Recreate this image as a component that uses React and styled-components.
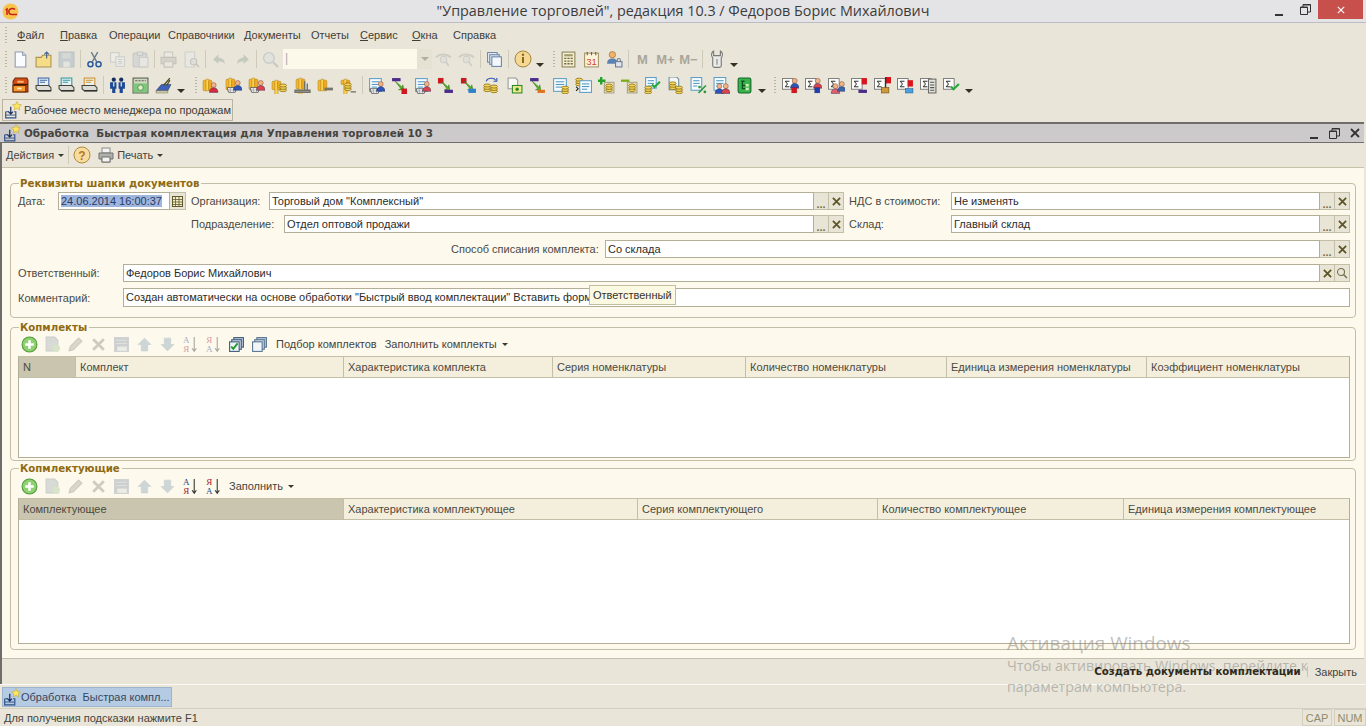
import styled, { createGlobalStyle } from "styled-components";

const GlobalStyle = createGlobalStyle`
  html, body { margin: 0; padding: 0; height: 100%; overflow: hidden; }
  body { font-family: "Liberation Sans", Arial, sans-serif; font-size: 11px; color: #3a3a36; background: #e9e5d9; }
  #root { height: 100%; }
  * { box-sizing: border-box; }
`;

const Page = styled.div`
  position: relative;
  width: 1366px;
  height: 726px;
  display: flex;
  flex-direction: column;
  overflow: hidden;
`;

const TitleBar = styled.div`
  height: 23px;
  flex: none;
  position: relative;
  display: flex;
  align-items: center;
  justify-content: center;
  background: #e4e4e6;
  border-bottom: 1px solid #bcbcc4;
`;

const AppLogo = styled.div`
  position: absolute;
  left: 2px;
  top: 3px;
`;

const TitleText = styled.div`
  font-family: "Open Sans", sans-serif;
  font-size: 14.35px;
  color: #3c3c3c;
  margin-left: 0;
  margin-top: -1px;
`;

const WinButtons = styled.div`
  position: absolute;
  right: 3px;
  top: 0;
  height: 19px;
  display: flex;
  align-items: center;
`;

const WinBtn = styled.div`
  width: ${(p) => p.$w}px;
  height: 19px;
  display: flex;
  align-items: center;
  justify-content: center;
  background: ${(p) => p.$bg || "transparent"};
`;

const MenuBar = styled.div`
  height: 23px;
  flex: none;
  display: flex;
  align-items: center;
  padding-left: 3px;
`;

const MenuItem = styled.div`
  width: ${(p) => p.$w}px;
  font-size: 11px;
  color: #3f3f39;
`;

const Toolbar = styled.div`
  height: 26px;
  flex: none;
  display: flex;
  align-items: center;
  padding-left: 3px;
`;

const Grip = styled.div`
  width: 6px;
  height: 16px;
  flex: none;
  margin-left: ${(p) => p.$ml || 0}px;
  margin-right: ${(p) => p.$mr || 0}px;
  background: repeating-linear-gradient(to bottom, #b8b4a4 0 1px, transparent 1px 3px);
  background-size: 2px 100%;
  background-repeat: no-repeat;
  background-position: center;
`;

const ToolBtn = styled.div`
  width: 23px;
  height: 22px;
  flex: none;
  display: flex;
  align-items: center;
  justify-content: center;
  opacity: ${(p) => (p.$off ? 0.38 : 1)};
`;

const Sep = styled.div`
  width: 5px;
  height: 18px;
  flex: none;
  position: relative;
  &::after {
    content: "";
    position: absolute;
    left: 2px;
    top: 0;
    bottom: 0;
    width: 1px;
    background: #cfcab8;
  }
`;

const DropArrow = styled.div`
  width: 12px;
  height: 22px;
  flex: none;
  position: relative;
  &::after {
    content: "";
    position: absolute;
    left: 2px;
    bottom: 3px;
    border-left: 4px solid transparent;
    border-right: 4px solid transparent;
    border-top: 4px solid #35301f;
  }
`;

const Combo = styled.div`
  width: 149px;
  height: 20px;
  flex: none;
  margin-left: 1px;
  display: flex;
  background: #fdf9ea;
`;

const ComboInput = styled.div`
  flex: 1;
  padding-left: 2px;
  color: #aaa;
  font-size: 12px;
  line-height: 18px;
`;

const ComboDrop = styled.div`
  width: 15px;
  background: #e6e2d3;
  display: flex;
  align-items: center;
  justify-content: center;
  &::after {
    content: "";
    border-left: 4px solid transparent;
    border-right: 4px solid transparent;
    border-top: 4px solid #b2ae9f;
  }
`;

const MemoKey = styled.span`
  font-size: 13px;
  font-weight: 700;
  color: #a9a69a;
  white-space: nowrap;
`;

const TabRow = styled.div`
  height: 24px;
  flex: none;
  padding: 1px 0 0 2px;
`;

const OpenTab = styled.div`
  width: 231px;
  height: 22px;
  display: flex;
  align-items: center;
  gap: 2px;
  padding-left: 1px;
  background: #ece7da;
  border: 1px solid #b9b49f;
  font-size: 11px;
  color: #3c3c36;
  white-space: nowrap;
`;

const ChildWindow = styled.div`
  flex: 1;
  min-height: 0;
  margin-right: 2px;
  display: flex;
  flex-direction: column;
  border-left: 2px solid #6f6d6a;
  background: #fdf9ec;
`;

const ChildTitle = styled.div`
  height: 21px;
  flex: none;
  margin-left: -2px;
  display: flex;
  align-items: center;
  gap: 3px;
  padding: 0 0 0 3px;
  background: #cdcacb;
  border-top: 2px solid #6f6d6a;
  border-bottom: 1px solid #706e6c;
`;

const ChildTitleText = styled.div`
  flex: 1;
  font-family: "DejaVu Sans", sans-serif;
  font-size: 10.4px;
  font-weight: 700;
  color: #45443f;
  white-space: pre;
`;

const ChildButtons = styled.div`
  display: flex;
  align-items: center;
  gap: 10px;
  padding-right: 4px;
`;

const ActionBar = styled.div`
  height: 25px;
  flex: none;
  display: flex;
  align-items: center;
  padding-left: 4px;
  background: #ebe6da;
  border-bottom: 1px solid #c8c2a8;
`;

const ActionItem = styled.div`
  display: flex;
  align-items: center;
  gap: 3px;
  font-size: 11px;
  color: #44443e;
  margin-left: ${(p) => p.$ml || 0}px;
  margin-right: ${(p) => p.$mr || 0}px;
`;

const SmallArrow = styled.span`
  display: inline-block;
  border-left: 3px solid transparent;
  border-right: 3px solid transparent;
  border-top: 3px solid #3a3a34;
  margin-left: 1px;
`;

const Body = styled.div`
  flex: 1;
  min-height: 0;
  padding: 15px 8px 0;
`;

const Group = styled.div`
  position: relative;
  height: ${(p) => p.$h}px;
  margin-top: ${(p) => p.$mt || 0}px;
  padding: ${(p) => p.$pt}px 5px 0 7px;
  border: 1px solid #c3bea6;
  border-radius: 4px;
`;

const Legend = styled.div`
  position: absolute;
  left: 8px;
  top: -7px;
  padding: 0 2px 0 1px;
  background: #fdf9ec;
  font-family: "DejaVu Sans", sans-serif;
  font-size: 10.2px;
  font-weight: 700;
  line-height: 13px;
  color: #8f6a12;
`;

const FieldRow = styled.div`
  display: flex;
  align-items: center;
  height: ${(p) => p.$h || 18}px;
  margin-top: ${(p) => p.$mt || 0}px;
  margin-left: ${(p) => p.$ml || 0}px;
`;

const Label = styled.div`
  width: ${(p) => p.$w}px;
  margin-left: ${(p) => p.$ml || 0}px;
  flex: none;
  font-size: 11px;
  color: #4a4a44;
  white-space: nowrap;
`;

const Input = styled.div`
  flex: ${(p) => (p.$w ? "none" : "1")};
  width: ${(p) => (p.$w ? `${p.$w}px` : "auto")};
  height: 100%;
  padding-left: 2px;
  background: #fff;
  border: 1px solid #b3ae96;
  font-size: 11px;
  line-height: 16px;
  color: #2c2c2a;
  white-space: nowrap;
  overflow: hidden;
`;

const Selected = styled.span`
  background: #9fb6dc;
  color: #2b3b66;
`;

const FieldBtn = styled.div`
  width: ${(p) => p.$w || 15}px;
  height: 100%;
  flex: none;
  display: flex;
  align-items: center;
  justify-content: center;
  background: #e9e5d6;
  border: 1px solid #c3bea6;
  border-left: none;
  color: #5e5526;
  font-size: 11px;
  line-height: 1;
`;

const Dots = styled.span`
  margin-top: 6px;
  font-weight: 700;
  letter-spacing: 0;
  color: #776d3c;
`;

const GridToolbar = styled.div`
  height: 18px;
  display: flex;
  align-items: center;
`;

const GridBtn = styled.div`
  width: 23px;
  height: 18px;
  flex: none;
  display: flex;
  align-items: center;
  justify-content: center;
  opacity: ${(p) => (p.$off ? 0.42 : 1)};
`;

const GridText = styled.div`
  display: flex;
  align-items: center;
  gap: 4px;
  margin-left: ${(p) => p.$ml || 0}px;
  font-size: 11px;
  color: #44443e;
  white-space: nowrap;
`;

const Table = styled.div`
  height: ${(p) => p.$h}px;
  margin-top: 3px;
  background: #fff;
  border: 1px solid #b3ae96;
  border-top-color: #c3bea6;
`;

const TableHead = styled.div`
  height: 21px;
  display: grid;
  grid-template-columns: ${(p) => p.$cols};
  border-bottom: 1px solid #c3bea6;
`;

const HeadCell = styled.div`
  padding-left: 4px;
  line-height: 20px;
  font-size: 11px;
  color: #4b4a42;
  background: ${(p) => (p.$active ? "#c9c5ae" : "#f4efdd")};
  border-right: 1px solid #c3bea6;
  white-space: nowrap;
  overflow: hidden;
  &:last-child { border-right: none; }
`;

const BottomBar = styled.div`
  height: 26px;
  flex: none;
  display: flex;
  align-items: center;
  justify-content: flex-end;
  padding-right: 7px;
  background: #e9e5d9;
  border-top: 1px solid #c4c0ad;
`;

const CreateBtn = styled.div`
  font-family: "DejaVu Sans", sans-serif;
  font-weight: 700;
  font-size: 10.2px;
  color: #2e2a1c;
  padding-right: 6px;
  border-right: 1px solid #c9c5b4;
  position: relative;
  z-index: 2;
`;

const CloseBtn = styled.div`
  font-size: 11px;
  color: #44443e;
  padding-left: 7px;
  position: relative;
  z-index: 2;
`;

const TaskBar = styled.div`
  height: 24px;
  flex: none;
  padding: 2px 0 0 2px;
  border-top: 1px solid #fbfaf4;
`;

const TaskTab = styled.div`
  width: 170px;
  height: 20px;
  display: flex;
  align-items: center;
  gap: 0;
  padding-left: 0;
  background: #b5cbe3;
  border: 1px solid #9db4ce;
  font-size: 11px;
  color: #38475e;
  white-space: pre;
`;

const StatusBar = styled.div`
  height: 18px;
  flex: none;
  display: flex;
  align-items: center;
  gap: 2px;
  padding: 0 0 0 4px;
  border-top: 1px solid #d4d0bf;
  font-size: 11px;
  color: #44443e;
`;

const StatusText = styled.div`
  flex: 1;
`;

const StatusCell = styled.div`
  width: ${(p) => p.$w}px;
  height: 17px;
  line-height: 16px;
  text-align: center;
  color: #8f8b6c;
  border: 1px solid #d4d0bf;
`;

const Tooltip = styled.div`
  position: absolute;
  left: 589px;
  top: 285px;
  width: 87px;
  height: 20px;
  padding-left: 3px;
  line-height: 18px;
  font-size: 11px;
  color: #33332c;
  background: #fcf9e2;
  border: 1px solid #c3bea0;
  z-index: 5;
`;

const Watermark = styled.div`
  position: absolute;
  left: 1007px;
  top: 632px;
  font-family: "Open Sans", sans-serif;
  color: rgba(130, 130, 125, 0.5);
  z-index: 1;
  pointer-events: none;
`;

const WatermarkTitle = styled.div`
  font-size: 18.9px;
  line-height: 22px;
`;

const WatermarkText = styled.div`
  margin-top: 1px;
  font-size: 14.2px;
  line-height: 21px;
  white-space: nowrap;
`;

/* ---- icon parts, all in a 16x16 box ---- */

const Svg = ({ children, size = 17, box = 16 }) => (
  <svg width={size} height={size} viewBox={`0 0 ${box} ${box}`} style={{ display: "block", flex: "none" }}>
    {children}
  </svg>
);

const Person = ({ x = 0, y = 0, c = "#2c55b8" }) => (
  <g transform={`translate(${x} ${y})`}>
    <circle cx="4" cy="2.6" r="2.3" fill="#f0b48a" stroke="#8a4a2a" strokeWidth=".5" />
    <path d="M0 9.5c0-3 1.6-4.4 4-4.4s4 1.4 4 4.4z" fill={c} stroke="#1e2a55" strokeWidth=".4" />
  </g>
);

const Gold = ({ x = 0, y = 0, h = 10 }) => (
  <g transform={`translate(${x} ${y})`}>
    <rect x="0" y="1" width="3" height={h} rx="1" fill="#f6b830" stroke="#b07a10" strokeWidth=".5" />
    <rect x="2.6" y="0" width="3" height={h + 1} rx="1" fill="#fbd24e" stroke="#b07a10" strokeWidth=".5" />
    <rect x="5.2" y="1" width="3" height={h} rx="1" fill="#f3a921" stroke="#b07a10" strokeWidth=".5" />
  </g>
);

const Coins = ({ x = 0, y = 0 }) => (
  <g transform={`translate(${x} ${y})`} fill="#f7d65a" stroke="#7f6510" strokeWidth=".7">
    <ellipse cx="3.4" cy="6.4" rx="3.2" ry="1.4" />
    <ellipse cx="3.4" cy="4.2" rx="3.2" ry="1.4" />
    <ellipse cx="3.4" cy="2" rx="3.2" ry="1.4" />
  </g>
);

const Basket = ({ x = 0, y = 0 }) => (
  <g transform={`translate(${x} ${y})`}>
    <path d="M0 0h9l-1.4 4.4H1.4z" fill="#fff" stroke="#555" strokeWidth=".8" />
    <path d="M3 .4v3.6M6 .4v3.6M.7 2.2h7.6" stroke="#777" strokeWidth=".5" />
  </g>
);

const Sheet = ({ x = 0, y = 0, w = 11, h = 12, lines = "#3f8fbf", ink = "#5f9fc7" }) => (
  <g transform={`translate(${x} ${y})`}>
    <rect x=".5" y=".5" width={w} height={h} fill="#f6fbfe" stroke={ink} />
    <path d={`M2.5 3.5h${w - 4}M2.5 6h${w - 4}M2.5 8.5h${w - 6}`} stroke={lines} strokeWidth=".9" />
  </g>
);

const Block = ({ x, y, w = 5, h = 5, c = "#d8141c" }) => (
  <rect x={x} y={y} width={w} height={h} fill={c} stroke="#00000044" strokeWidth=".4" />
);

const Dash = ({ x, y, w = 8, c = "#4c2b8a" }) => (
  <g>
    <rect x={x} y={y} width={w} height="3" fill={c} />
    <path d={`M${x + 1} ${y + 1.5}h${w - 2}`} stroke="#fff" strokeWidth=".8" strokeDasharray="1 1" />
  </g>
);

const DownArrow = ({ x = 4, y = 4 }) => (
  <path
    transform={`translate(${x} ${y})`}
    d="M0 0l7 6V3.4L8 8H3.2L5.4 7z"
    fill="#62b52a"
    stroke="#2f7d14"
    strokeWidth=".6"
  />
);

const Sigma = ({ x = 0, y = 1 }) => (
  <g transform={`translate(${x} ${y})`}>
    <rect x=".5" y=".5" width="10" height="10" fill="#fdfdfb" stroke="#6b6b6b" strokeWidth=".8" />
    <path d="M7 3H3l2.2 2.6L3 8.2h4" fill="none" stroke="#222" strokeWidth=".9" />
  </g>
);

const Check = ({ x = 7, y = 6 }) => (
  <path transform={`translate(${x} ${y})`} d="M.5 3l2.3 2.5L8 .5" fill="none" stroke="#24a83a" strokeWidth="2" />
);

const Printer = ({ band }) => (
  <>
    <rect x="3" y="1" width="10" height="7" fill="#e8f3f6" stroke={band} />
    <path d="M4.5 3h7M4.5 5h5" stroke={band} />
    <path d="M1 8h12l2 2v3H3l-2-2z" fill="#dcdcd4" stroke="#44443c" />
    <path d="M3 13h12" stroke="#222" strokeWidth="1.2" />
  </>
);

// tray with a down arrow and a yellow star: the form icon of the window
const Wizard = ({ size = 18 }) => (
  <Svg size={size}>
    <path d="M1.500 9.500h3M9 9.500h1.500v5.500h-9V9.500" fill="none" stroke="#2f4f86" strokeWidth="1" />
    <path d="M1.500 12.500h9" stroke="#2f4f86" strokeWidth=".8" />
    <path d="M6 5v6.500M4 9.500l2 2.200 2-2.200" fill="none" stroke="#1c2f5c" strokeWidth="1.100" />
    <path d="M11.500 .5l1.100 2.500 2.900.4-2.100 1.900.6 2.700-2.500-1.500-2.500 1.500.6-2.700-2.100-1.900 2.900-.4z" fill="#fbe75e" stroke="#c4a32e" strokeWidth=".5" />
  </Svg>
);

const barIcons = {
  newDoc: (
    <Svg>
      <path d="M3 1h7l3 3v11H3z" fill="#fbfcff" stroke="#8f99ad" />
      <path d="M10 1v3h3" fill="#dde2ee" stroke="#8f99ad" />
    </Svg>
  ),
  open: (
    <Svg>
      <path d="M1 6h5l1-2h8v11H1z" fill="#f6dc86" stroke="#aa9350" />
      <path d="M11 7V1M8.800 3.200L11 1l2.200 2.200" fill="none" stroke="#48648c" strokeWidth="1.100" />
    </Svg>
  ),
  save: (
    <Svg>
      <path d="M1 1h14v14H1z" fill="#8fa7bd" stroke="#74889c" />
      <rect x="4" y="2" width="8" height="5" fill="#b7c6d3" />
      <rect x="5" y="10" width="6" height="5" fill="#dde3e8" />
    </Svg>
  ),
  cut: (
    <Svg>
      <path d="M5 1l5 9M11 1L6 10" stroke="#6b7d8e" strokeWidth="1.300" />
      <circle cx="4.200" cy="12.500" r="2.400" fill="none" stroke="#2a5a9c" strokeWidth="1.400" />
      <circle cx="11.800" cy="12.500" r="2.400" fill="none" stroke="#2a5a9c" strokeWidth="1.400" />
    </Svg>
  ),
  copy: (
    <Svg>
      <rect x="1.500" y="1.500" width="8" height="9" fill="#f3f5f8" stroke="#9aa8b8" />
      <rect x="6.500" y="5.500" width="8" height="9" fill="#f3f5f8" stroke="#9aa8b8" />
      <path d="M8.500 8h4M8.500 10h4M8.500 12h4" stroke="#9aa8b8" />
    </Svg>
  ),
  paste: (
    <Svg>
      <rect x="1" y="2" width="13" height="13" rx="1" fill="#b9c3ce" stroke="#8e9aa8" />
      <rect x="5" y="1" width="5" height="3" fill="#d6dce3" stroke="#8e9aa8" />
      <rect x="7" y="6" width="8" height="9" fill="#e4e8ec" stroke="#9aa6b2" />
    </Svg>
  ),
  print: (
    <Svg>
      <rect x="4" y="1" width="8" height="5" fill="#eee" stroke="#999" />
      <path d="M1 6h14v6h-3v3H4v-3H1z" fill="#b4b4b0" stroke="#8a8a86" />
      <rect x="4" y="10" width="8" height="5" fill="#e8e8e8" stroke="#999" />
    </Svg>
  ),
  preview: (
    <Svg>
      <path d="M2 1h9v14H2z" fill="#e9ebef" stroke="#a8adb5" />
      <circle cx="10" cy="10" r="3" fill="#ced6de" stroke="#8f8f88" />
      <path d="M12 12l3 3" stroke="#8f8f88" strokeWidth="1.600" />
    </Svg>
  ),
  undo: (
    <Svg>
      <path d="M7 3L2 8l5 4V9.600c2.600 0 4.600.8 6 2.400 0-3.600-2.200-5.600-6-6z" fill="#8ba094" />
    </Svg>
  ),
  redo: (
    <Svg>
      <path d="M9 3l5 5-5 4V9.600c-2.600 0-4.600.8-6 2.400 0-3.600 2.200-5.600 6-6z" fill="#8ba094" />
    </Svg>
  ),
  search: (
    <Svg>
      <circle cx="6.500" cy="6.500" r="5" fill="#d8dee6" stroke="#9aa2ac" strokeWidth="1.300" />
      <path d="M10.500 10.500l4.500 4.500" stroke="#a09a84" strokeWidth="2" />
    </Svg>
  ),
  findPrev: (
    <Svg>
      <path d="M1 6c3-3.600 10-3.600 14 0" fill="none" stroke="#a7aba8" strokeWidth="2" />
      <circle cx="8" cy="8" r="3" fill="#d2dadf" stroke="#a7aba8" />
      <path d="M10 10l3 4" stroke="#a7aba8" strokeWidth="1.600" />
    </Svg>
  ),
  windows: (
    <Svg>
      <rect x="1.500" y="1.500" width="9" height="9" fill="#f3f6fa" stroke="#6c86a8" />
      <rect x="3.500" y="3.500" width="9" height="9" fill="#dbe6f2" stroke="#6c86a8" />
      <rect x="5.500" y="5.500" width="9" height="9" fill="#f3f6fa" stroke="#6c86a8" />
    </Svg>
  ),
  calc: (
    <Svg>
      <rect x="2" y="1" width="12" height="14" fill="#f3ecd0" stroke="#8b8358" />
      <rect x="4" y="3" width="8" height="2" fill="#9f9a6c" />
      <path d="M4 7h2M7 7h2M10 7h2M4 9.500h2M7 9.500h2M10 9.500h2M4 12h2M7 12h2M10 12h2" stroke="#6d6a3c" strokeWidth="1.200" />
    </Svg>
  ),
  calendar: (
    <Svg>
      <rect x="1.500" y="2" width="13" height="13" fill="#fbf3da" stroke="#a39568" />
      <path d="M4 1v3M8 1v3M12 1v3" stroke="#8a5a2a" />
      <text x="8" y="13" fontSize="9" textAnchor="middle" fill="#d8432c" fontFamily="Liberation Sans">31</text>
    </Svg>
  ),
  userLock: (
    <Svg>
      <circle cx="6" cy="3.500" r="3" fill="#f1b36a" stroke="#9a6a2c" strokeWidth=".6" />
      <path d="M1 12c0-3.600 2-5 5-5s5 1.400 5 5z" fill="#5c82b4" />
      <rect x="9" y="10" width="6" height="5" fill="#dfe6ee" stroke="#6c7c90" />
      <path d="M10.500 10V8.600a1.500 1.500 0 0 1 3 0V10" fill="none" stroke="#6c7c90" />
    </Svg>
  ),
  wrench: (
    <Svg size={18}>
      <path d="M5 1v4h6V1c2 1 2.600 4 .8 6v7a1.600 1.600 0 0 1-1.600 1.400H5.800A1.600 1.600 0 0 1 4.200 14V7C2.400 5 3 2 5 1z" fill="#eaeaea" stroke="#7b7b76" />
      <path d="M8 8v5" stroke="#a4a49c" strokeWidth="1.400" />
    </Svg>
  ),
  cabinet: (
    <Svg>
      <path d="M3 1h11l1 2v11H1V4z" fill="#d24a14" stroke="#6e2a08" />
      <path d="M2 7h13" stroke="#3a1a08" />
      <rect x="5" y="3.500" width="6" height="2" fill="#f7b26a" />
      <rect x="1" y="8" width="12" height="6" fill="#f59a2e" stroke="#6e2a08" />
      <rect x="5" y="10" width="4" height="1.500" fill="#fff0d0" />
    </Svg>
  ),
  printerBlue: <Svg><Printer band="#3c64a8" /></Svg>,
  printerTeal: <Svg><Printer band="#2e9aa0" /></Svg>,
  printerGold: <Svg><Printer band="#d0902a" /></Svg>,
  people: (
    <Svg>
      <circle cx="4.500" cy="2.500" r="2" fill="#16305f" />
      <circle cx="11.500" cy="2.500" r="2" fill="#16305f" />
      <path d="M1 5h6v6H6v4H3v-4H1zM9 5h6v6h-2v4h-3v-4H9z" fill="#1c4a94" />
      <path d="M4.500 5v4M11.500 5v4" stroke="#fff" />
    </Svg>
  ),
  money: (
    <Svg>
      <rect x="1" y="1" width="14" height="14" fill="#d2d8c4" stroke="#57604a" />
      <rect x="1.500" y="6" width="13" height="8.500" fill="#7ec77c" />
      <circle cx="8" cy="10" r="2.600" fill="#d8f0c8" stroke="#2f6a2a" strokeWidth=".6" />
      <path d="M3 3.500h10" stroke="#57604a" strokeDasharray="2 1" />
    </Svg>
  ),
  penBoard: (
    <Svg>
      <path d="M1 13l5-6h9l-3 6z" fill="#3f62b8" stroke="#1e2a55" strokeWidth=".5" />
      <path d="M1 13h11v2H1z" fill="#dcd8b0" stroke="#6c6a4a" strokeWidth=".5" />
      <path d="M8 8l6-7M11 8l3-5" stroke="#4d4a22" strokeWidth="1.200" />
    </Svg>
  ),
  goldRedBuyer: <Svg><Gold x="1" y="2" /><Person x="7" y="5" c="#d82c3c" /></Svg>,
  goldBasketBlue: <Svg><Gold x="1" y="1" /><Basket x="2" y="10" /><Person x="8" y="3" c="#2c55b8" /></Svg>,
  goldBasketRed: <Svg><Gold x="1" y="1" /><Basket x="2" y="10" /><Person x="8" y="3" c="#d8434c" /></Svg>,
  goldCoins: <Svg><Gold x="1" y="3" h="8" /><Coins x="8" y="6" /></Svg>,
  goldBars: (
    <Svg>
      <Gold x="2" y="1" h="9" />
      <path d="M10 4v8M12.500 6v6M1 12.500h14v2H1z" stroke="#717168" strokeWidth="1.300" fill="#9a9a90" />
    </Svg>
  ),
  goldDash: <Svg><Gold x="1" y="2" /><rect x="7" y="10" width="8" height="2.600" fill="#75756a" /></Svg>,
  coinsLine: (
    <Svg>
      <Gold x="1" y="2" h="4" />
      <Coins x="4" y="5" />
      <path d="M10 14h5" stroke="#75756a" strokeWidth="1.300" />
    </Svg>
  ),
  docBasketBlue: <Svg><Sheet x="1" y="1" /><Basket x="2" y="11" /><Person x="8" y="4" c="#2c55b8" /></Svg>,
  docBasketRed: <Svg><Sheet x="1" y="1" /><Basket x="2" y="11" /><Person x="8" y="4" c="#d8434c" /></Svg>,
  dashArrowRed: <Svg><Dash x="1" y="1" /><DownArrow x="4" y="4" /><Block x="10" y="11" /></Svg>,
  redArrowDash: <Svg><Block x="1" y="1" /><DownArrow x="4" y="4" /><Dash x="7" y="12" /></Svg>,
  redArrowBlue: <Svg><Block x="1" y="1" /><DownArrow x="4" y="4" /><Dash x="8" y="11" w="7" c="#2f7fd0" /><rect x="8" y="13" width="7" height="2" fill="#2f7fd0" /></Svg>,
  coinsCycle: (
    <Svg>
      <path d="M3 4c1-3 7-4 9-1M13 1v3h-3" fill="none" stroke="#2c55b8" />
      <Coins x="0.500" y="6" />
      <Coins x="7" y="7" />
    </Svg>
  ),
  docPrint: <Svg><path d="M2 1h7l2 2v8H2z" fill="#f7f7f4" stroke="#999" /><rect x="6" y="8" width="9" height="7" fill="#f3e78c" stroke="#2a8a28" /><circle cx="10.500" cy="11.500" r="1.600" fill="#2a8a28" /></Svg>,
  dashArrowOrange: <Svg><Dash x="1" y="1" /><DownArrow x="3" y="4" /><rect x="8" y="12" width="7" height="3" fill="#e2701e" /></Svg>,
  docCoinsIn: <Svg><Sheet x="1" y="1" w="12" /><Coins x="9" y="8" /></Svg>,
  coinsDoc: <Svg><Coins x="0.500" y="0.500" /><Sheet x="4" y="3" w="11" h="11" /><path d="M1 9l2 2-2 2" fill="none" stroke="#222" /></Svg>,
  plusCoins: (
    <Svg>
      <path d="M3 0v7M0 3.500h7" stroke="#22a32a" strokeWidth="2.200" />
      <rect x="6" y="5" width="9" height="10" fill="#e8e2c4" stroke="#a8a282" />
      <Coins x="7" y="6" />
    </Svg>
  ),
  minusCoins: (
    <Svg>
      <path d="M0 3.500h8" stroke="#7aae16" strokeWidth="2.200" />
      <rect x="6" y="5" width="9" height="10" fill="#e8e2c4" stroke="#a8a282" />
      <Coins x="7" y="6" />
    </Svg>
  ),
  docCheck: <Svg><Sheet x="1" y="0" w="10" h="10" /><Coins x="0.500" y="8" /><Check x="7" y="4" /></Svg>,
  coinsPair: <Svg><path d="M2 0h7l2 2v10H2z" fill="#f5f7f2" stroke="#6a8fa8" /><Coins x="2" y="4" /><Coins x="8" y="8" /></Svg>,
  docPercent: (
    <Svg>
      <Sheet x="0.500" y="0" w="10" h="12" />
      <path d="M8 15l7-7" stroke="#2a9a3c" strokeWidth="1.500" />
      <circle cx="9" cy="9.500" r="1.300" fill="#2a9a3c" />
      <circle cx="14" cy="14" r="1.300" fill="#2a9a3c" />
    </Svg>
  ),
  docPeople: <Svg><Sheet x="0.500" y="0" /><Person x="2" y="6" c="#2c55b8" /><Person x="8" y="6" c="#d8434c" /></Svg>,
  greenTree: (
    <Svg>
      <rect x="2" y="1" width="12" height="14" rx="1.500" fill="#38b24a" stroke="#106828" />
      <path d="M5 4h3M6 4v7h3M6 8h3" fill="none" stroke="#0b5220" strokeWidth="1.200" />
      <rect x="9" y="6.500" width="3" height="2.500" fill="#c9f0b0" />
      <rect x="9" y="10" width="3" height="2.500" fill="#c9f0b0" />
    </Svg>
  ),
  sigPeopleRed: <Svg><Sigma /><Person x="8" y="1" c="#2c55b8" /><Block x="9" y="10" c="#d8141c" /></Svg>,
  sigPeopleBlue: <Svg><Sigma /><Person x="8" y="1" c="#d8434c" /><Block x="9" y="10" c="#1e3fb0" /></Svg>,
  sigTwo: <Svg><Sigma /><Person x="3" y="6" c="#e0606a" /><Person x="9" y="4" c="#3c64a8" /></Svg>,
  sigFlagPurple: <Svg><Sigma /><path d="M10 1h5v6h-5z" fill="#d8141c" /><Dash x="7" y="12" /></Svg>,
  sigFlagOrange: <Svg><Sigma /><path d="M11 0h5v6h-5z" fill="#d8141c" /><path d="M11 0v10" stroke="#222" /><rect x="7" y="10" width="7" height="5" fill="#d09a3c" stroke="#70501a" strokeWidth=".6" /></Svg>,
  sigFlagBlue: <Svg><Sigma /><path d="M10 3h5v6h-5z" fill="#d8141c" /><rect x="8" y="11" width="7" height="4" fill="#4aa0e0" stroke="#1e5a90" strokeWidth=".5" /></Svg>,
  sigList: (
    <Svg>
      <Sigma />
      <rect x="8" y="2" width="7" height="13" fill="#e4e4e0" stroke="#6a6a64" />
      <path d="M9.500 5h4M9.500 7.500h4M9.500 10h4M9.500 12.500h4" stroke="#55554f" />
    </Svg>
  ),
  sigCheck: <Svg><Sigma /><Check x="7" y="6" /></Svg>,
};

const gridIcons = {
  add: (
    <Svg>
      <circle cx="8" cy="8" r="7" fill="#8fd070" stroke="#4f9a3a" />
      <path d="M8 4v8M4 8h8" stroke="#fff" strokeWidth="2.400" />
    </Svg>
  ),
  addGrey: (
    <Svg>
      <path d="M2 1h8l3 3v10H2z" fill="#a6b0b8" stroke="#8c969e" />
      <circle cx="11.500" cy="11.500" r="3.500" fill="#a5c89a" />
    </Svg>
  ),
  edit: (
    <Svg>
      <path d="M11 2l3 3-8 8-4 1 1-4z" fill="#a8a8a0" stroke="#8a8a82" />
    </Svg>
  ),
  del: (
    <Svg>
      <path d="M3 3l10 10M13 3L3 13" stroke="#8f8f88" strokeWidth="2.600" />
    </Svg>
  ),
  save: (
    <Svg>
      <rect x="1" y="1" width="14" height="14" fill="#8d9aa8" />
      <path d="M3 4h10M3 7h10" stroke="#b7c2cc" />
      <rect x="4" y="10" width="9" height="4" fill="#d6dbe0" />
    </Svg>
  ),
  up: <Svg><path d="M8 2l6 6h-3v6H5V8H2z" fill="#8ba8b8" stroke="#7d98a8" strokeWidth=".6" /></Svg>,
  down: <Svg><path d="M8 14l6-6h-3V2H5v6H2z" fill="#8ba8b8" stroke="#7d98a8" strokeWidth=".6" /></Svg>,
  sortUp: (
    <Svg>
      <text x="4" y="7" fontSize="8.500" textAnchor="middle" fill="#1e4a8c" fontFamily="Liberation Serif">А</text>
      <text x="4" y="15" fontSize="8.500" textAnchor="middle" fill="#a8202c" fontFamily="Liberation Serif">Я</text>
      <path d="M11.500 1v13M9.500 11.500l2 3 2-3" fill="none" stroke="#333" />
    </Svg>
  ),
  sortDown: (
    <Svg>
      <text x="4" y="7" fontSize="8.500" textAnchor="middle" fill="#a8202c" fontFamily="Liberation Serif">Я</text>
      <text x="4" y="15" fontSize="8.500" textAnchor="middle" fill="#1e4a8c" fontFamily="Liberation Serif">А</text>
      <path d="M11.500 1v13M9.500 11.500l2 3 2-3" fill="none" stroke="#333" />
    </Svg>
  ),
  checkAll: (
    <Svg>
      <rect x="5.500" y="1.500" width="9" height="9" fill="#b8c8d8" stroke="#3c5a7a" />
      <rect x="3.500" y="3.500" width="9" height="9" fill="#cfdbe6" stroke="#3c5a7a" />
      <rect x="1.500" y="5.500" width="9" height="9" fill="#eef3f6" stroke="#3c5a7a" />
      <path d="M3 10l2 2 4-5" fill="none" stroke="#1f9a32" strokeWidth="1.800" />
    </Svg>
  ),
  unCheckAll: (
    <Svg>
      <rect x="5.500" y="1.500" width="9" height="9" fill="#b8c8d8" stroke="#55738f" />
      <rect x="3.500" y="3.500" width="9" height="9" fill="#cfdbe6" stroke="#55738f" />
      <rect x="1.500" y="5.500" width="9" height="9" fill="#f3f6f8" stroke="#55738f" />
    </Svg>
  ),
};

const Cross = ({ size = 10, color = "#5e5526", w = 2 }) => (
  <svg width={size} height={size} viewBox="0 0 10 10" style={{ display: "block" }}>
    <path d="M1 1l8 8M9 1l-8 8" stroke={color} strokeWidth={w} />
  </svg>
);

const Restore = ({ color = "#333" }) => (
  <svg width="11" height="11" viewBox="0 0 11 11" style={{ display: "block" }}>
    <path d="M.5 3h7v7.500h-7zM3 3V.5h7.500V8H8" fill="none" stroke={color} />
    <path d="M.5 3.500h7M3 1h7.500" stroke={color} />
  </svg>
);

const Minimize = () => (
  <svg width="9" height="9" viewBox="0 0 9 9" style={{ display: "block", marginTop: 5 }}>
    <rect x="0" y="6" width="8" height="2" fill="#333" />
  </svg>
);

const LookupGlass = () => (
  <svg width="12" height="12" viewBox="0 0 12 12" style={{ display: "block" }}>
    <circle cx="5" cy="5" r="3.500" fill="none" stroke="#74704a" strokeWidth="1.100" />
    <path d="M7.500 7.500l3.500 3.500" stroke="#74704a" strokeWidth="1.500" />
  </svg>
);

const CalendarGlyph = () => (
  <svg width="11" height="11" viewBox="0 0 11 11" style={{ display: "block" }}>
    <rect x=".5" y=".5" width="10" height="10" fill="#f4edc7" stroke="#5f5a2e" />
    <path d="M.5 3.500h10M.5 6h10M.5 8.500h10M3.500 .5v10M7 .5v10" stroke="#5f5a2e" strokeWidth=".8" />
  </svg>
);

const HelpIcon = () => (
  <svg width="18" height="18" viewBox="0 0 18 18" style={{ display: "block" }}>
    <circle cx="9" cy="9" r="8" fill="#f7dca0" stroke="#b48a3c" />
    <text x="9" y="13.500" fontSize="12" fontWeight="700" textAnchor="middle" fill="#b5761e" fontFamily="Liberation Sans">?</text>
  </svg>
);

const InfoIcon = () => (
  <svg width="18" height="18" viewBox="0 0 18 18" style={{ display: "block" }}>
    <circle cx="9" cy="9" r="8" fill="#f5d894" stroke="#a8853c" />
    <path d="M9 7v6" stroke="#8c6a1c" strokeWidth="2" />
    <circle cx="9" cy="4.700" r="1.200" fill="#8c6a1c" />
  </svg>
);

const PrintSmall = () => (
  <Svg size={16}>
    <rect x="4" y="1" width="8" height="5" fill="#f3f3f3" stroke="#8a8a86" />
    <path d="M1 6h14v6h-3v3H4v-3H1z" fill="#b0b0ac" stroke="#70706c" />
    <rect x="4" y="10" width="8" height="5" fill="#f3f3f3" stroke="#70706c" />
  </Svg>
);

const Logo1C = () => (
  <svg width="17" height="17" viewBox="0 0 17 17" style={{ display: "block" }}>
    <circle cx="8.500" cy="8.500" r="8" fill="#f8c44c" />
    <path d="M3.500 7l1.500-1v6" fill="none" stroke="#c6201a" strokeWidth="1.500" />
    <path d="M13 6.500C11.500 5 8 5 7 7.500c-1 2.500 1 4 3 4h5" fill="none" stroke="#c6201a" strokeWidth="1.600" />
  </svg>
);

const rowOne = ["newDoc", "open", "save", "|", "cut", "copy", "paste", "|", "print", "preview", "|", "undo", "redo", "|", "search"];
const rowOneOff = new Set(["save", "copy", "paste", "print", "preview", "undo", "redo", "search"]);
const rowTwoA = ["cabinet", "printerBlue", "printerTeal", "printerGold", "|", "people", "money", "penBoard"];
const rowTwoB = ["goldRedBuyer", "goldBasketBlue", "goldBasketRed", "goldCoins", "goldBars", "goldDash", "coinsLine", "|",
  "docBasketBlue", "dashArrowRed", "docBasketRed", "redArrowDash", "redArrowBlue", "coinsCycle", "docPrint", "dashArrowOrange",
  "docCoinsIn", "coinsDoc", "plusCoins", "minusCoins", "docCheck", "coinsPair", "docPercent", "docPeople", "greenTree"];
const rowTwoC = ["sigPeopleRed", "sigPeopleBlue", "sigTwo", "sigFlagPurple", "sigFlagOrange", "sigFlagBlue", "sigList", "sigCheck"];

const BarIcons = ({ names }) =>
  names.map((name, i) =>
    name === "|" ? (
      <Sep key={i} />
    ) : (
      <ToolBtn key={i} $off={rowOneOff.has(name)}>
        {barIcons[name]}
      </ToolBtn>
    ),
  );

const menuItems = [
  [43, "Ф", "айл"],
  [49, "П", "равка"],
  [59, "", "Операции"],
  [76, "", "Справочники"],
  [67, "Д", "окументы"],
  [49, "", "Отчеты"],
  [52, "С", "ервис"],
  [41, "О", "кна"],
  [60, "", "Справка"],
];

const Actions = ({ text }) => (
  <FieldBtn>{text === "x" ? <Cross size={9} /> : <Dots>...</Dots>}</FieldBtn>
);

const kitCols = "57px 268px 209px 193px 201px 200px 1fr";
const partCols = "325px 294px 240px 246px 1fr";

const App = () => {
  return (
    <Page>
      <GlobalStyle />
      <TitleBar>
        <AppLogo>
          <Logo1C />
        </AppLogo>
        <TitleText>"Управление торговлей", редакция 10.3 / Федоров Борис Михайлович</TitleText>
        <WinButtons>
          <WinBtn $w={26}>
            <Minimize />
          </WinBtn>
          <WinBtn $w={26}>
            <Restore />
          </WinBtn>
          <WinBtn $w={45} $bg="#c7504c">
            <Cross size={8} color="#fff" w={1.4} />
          </WinBtn>
        </WinButtons>
      </TitleBar>

      <MenuBar>
        <Grip $mr={8} />
        {menuItems.map(([w, mark, rest]) => (
          <MenuItem key={rest} $w={w}>
            {mark && <u>{mark}</u>}
            {rest}
          </MenuItem>
        ))}
      </MenuBar>

      <Toolbar>
        <Grip />
        <BarIcons names={rowOne} />
        <Combo>
          <ComboInput>|</ComboInput>
          <ComboDrop />
        </Combo>
        <ToolBtn $off>{barIcons.findPrev}</ToolBtn>
        <ToolBtn $off>{barIcons.findPrev}</ToolBtn>
        <Sep />
        <ToolBtn>{barIcons.windows}</ToolBtn>
        <Sep />
        <ToolBtn>
          <InfoIcon />
        </ToolBtn>
        <DropArrow />
        <Grip $ml={5} />
        <ToolBtn>{barIcons.calc}</ToolBtn>
        <ToolBtn>{barIcons.calendar}</ToolBtn>
        <ToolBtn>{barIcons.userLock}</ToolBtn>
        <Sep />
        <ToolBtn>
          <MemoKey>M</MemoKey>
        </ToolBtn>
        <ToolBtn>
          <MemoKey>M+</MemoKey>
        </ToolBtn>
        <ToolBtn>
          <MemoKey>M−</MemoKey>
        </ToolBtn>
        <Sep />
        <ToolBtn>{barIcons.wrench}</ToolBtn>
        <DropArrow />
      </Toolbar>

      <Toolbar>
        <Grip />
        <BarIcons names={rowTwoA} />
        <DropArrow />
        <Grip $ml={6} />
        <BarIcons names={rowTwoB} />
        <DropArrow />
        <Grip $ml={4} $mr={1} />
        <BarIcons names={rowTwoC} />
        <DropArrow />
      </Toolbar>

      <TabRow>
        <OpenTab>
          <Wizard />
          Рабочее место менеджера по продажам
        </OpenTab>
      </TabRow>

      <ChildWindow>
        <ChildTitle>
          <Wizard />
          <ChildTitleText>Обработка  Быстрая комплектация для Управления торговлей 10 3</ChildTitleText>
          <ChildButtons>
            <Minimize />
            <Restore />
            <Cross size={10} color="#333" w={1.8} />
          </ChildButtons>
        </ChildTitle>

        <ActionBar>
          <ActionItem $mr={2}>
            Действия <SmallArrow />
          </ActionItem>
          <Sep />
          <ActionItem $ml={2} $mr={7}>
            <HelpIcon />
          </ActionItem>
          <ActionItem>
            <PrintSmall />
            Печать <SmallArrow />
          </ActionItem>
        </ActionBar>

        <Body>
          <Group $h={135} $pt={8}>
            <Legend>Реквизиты шапки документов</Legend>
            <FieldRow>
              <Label $w={40}>Дата:</Label>
              <Input $w={112}>
                <Selected>24.06.2014 16:00:37</Selected>
              </Input>
              <FieldBtn $w={16}>
                <CalendarGlyph />
              </FieldBtn>
              <Label $w={78} $ml={5}>Организация:</Label>
              <Input $w={545}>Торговый дом "Комплексный"</Input>
              <Actions />
              <Actions text="x" />
              <Label $w={102} $ml={5}>НДС в стоимости:</Label>
              <Input>Не изменять</Input>
              <Actions />
              <Actions text="x" />
            </FieldRow>
            <FieldRow $mt={5} $ml={173}>
              <Label $w={93}>Подразделение:</Label>
              <Input $w={530}>Отдел оптовой продажи</Input>
              <Actions />
              <Actions text="x" />
              <Label $w={102} $ml={5}>Склад:</Label>
              <Input>Главный склад</Input>
              <Actions />
              <Actions text="x" />
            </FieldRow>
            <FieldRow $mt={7} $ml={433}>
              <Label $w={154}>Способ списания комплекта:</Label>
              <Input>Со склада</Input>
              <Actions />
              <Actions text="x" />
            </FieldRow>
            <FieldRow $mt={6}>
              <Label $w={105}>Ответственный:</Label>
              <Input>Федоров Борис Михайлович</Input>
              <Actions text="x" />
              <FieldBtn>
                <LookupGlass />
              </FieldBtn>
            </FieldRow>
            <FieldRow $mt={6} $h={19}>
              <Label $w={105}>Комментарий:</Label>
              <Input>Создан автоматически на основе обработки "Быстрый ввод комплектации" Вставить форму</Input>
            </FieldRow>
          </Group>

          <Group $h={134} $mt={9} $pt={7}>
            <Legend>Копмлекты</Legend>
            <GridToolbar>
              <GridBtn>{gridIcons.add}</GridBtn>
              <GridBtn $off>{gridIcons.addGrey}</GridBtn>
              <GridBtn $off>{gridIcons.edit}</GridBtn>
              <GridBtn $off>{gridIcons.del}</GridBtn>
              <GridBtn $off>{gridIcons.save}</GridBtn>
              <GridBtn $off>{gridIcons.up}</GridBtn>
              <GridBtn $off>{gridIcons.down}</GridBtn>
              <GridBtn $off>{gridIcons.sortUp}</GridBtn>
              <GridBtn $off>{gridIcons.sortDown}</GridBtn>
              <GridBtn>{gridIcons.checkAll}</GridBtn>
              <GridBtn>{gridIcons.unCheckAll}</GridBtn>
              <GridText $ml={5}>Подбор комплектов</GridText>
              <GridText $ml={8}>
                Заполнить комплекты <SmallArrow />
              </GridText>
            </GridToolbar>
            <Table $h={102}>
              <TableHead $cols={kitCols}>
                <HeadCell $active>N</HeadCell>
                <HeadCell>Комплект</HeadCell>
                <HeadCell>Характеристика комплекта</HeadCell>
                <HeadCell>Серия номенклатуры</HeadCell>
                <HeadCell>Количество номенклатуры</HeadCell>
                <HeadCell>Единица измерения номенклатуры</HeadCell>
                <HeadCell>Коэффициент номенклатуры</HeadCell>
              </TableHead>
            </Table>
          </Group>

          <Group $h={182} $mt={7} $pt={8}>
            <Legend>Копмлектующие</Legend>
            <GridToolbar>
              <GridBtn>{gridIcons.add}</GridBtn>
              <GridBtn $off>{gridIcons.addGrey}</GridBtn>
              <GridBtn $off>{gridIcons.edit}</GridBtn>
              <GridBtn $off>{gridIcons.del}</GridBtn>
              <GridBtn $off>{gridIcons.save}</GridBtn>
              <GridBtn $off>{gridIcons.up}</GridBtn>
              <GridBtn $off>{gridIcons.down}</GridBtn>
              <GridBtn>{gridIcons.sortUp}</GridBtn>
              <GridBtn>{gridIcons.sortDown}</GridBtn>
              <GridText $ml={4}>
                Заполнить <SmallArrow />
              </GridText>
            </GridToolbar>
            <Table $h={146}>
              <TableHead $cols={partCols}>
                <HeadCell $active>Комплектующее</HeadCell>
                <HeadCell>Характеристика комплектующее</HeadCell>
                <HeadCell>Серия комплектующего</HeadCell>
                <HeadCell>Количество комплектующее</HeadCell>
                <HeadCell>Единица измерения комплектующее</HeadCell>
              </TableHead>
            </Table>
          </Group>
        </Body>

        <BottomBar>
          <CreateBtn>Создать документы комплектации</CreateBtn>
          <CloseBtn>Закрыть</CloseBtn>
        </BottomBar>
      </ChildWindow>

      <TaskBar>
        <TaskTab>
          <Wizard />
          Обработка  Быстрая компл...
        </TaskTab>
      </TaskBar>

      <StatusBar>
        <StatusText>Для получения подсказки нажмите F1</StatusText>
        <StatusCell $w={30}>CAP</StatusCell>
        <StatusCell $w={32}>NUM</StatusCell>
      </StatusBar>

      <Tooltip>Ответственный</Tooltip>

      <Watermark>
        <WatermarkTitle>Активация Windows</WatermarkTitle>
        <WatermarkText>
          Чтобы активировать Windows, перейдите к
          <br />
          параметрам компьютера.
        </WatermarkText>
      </Watermark>
    </Page>
  );
};

export default App;
